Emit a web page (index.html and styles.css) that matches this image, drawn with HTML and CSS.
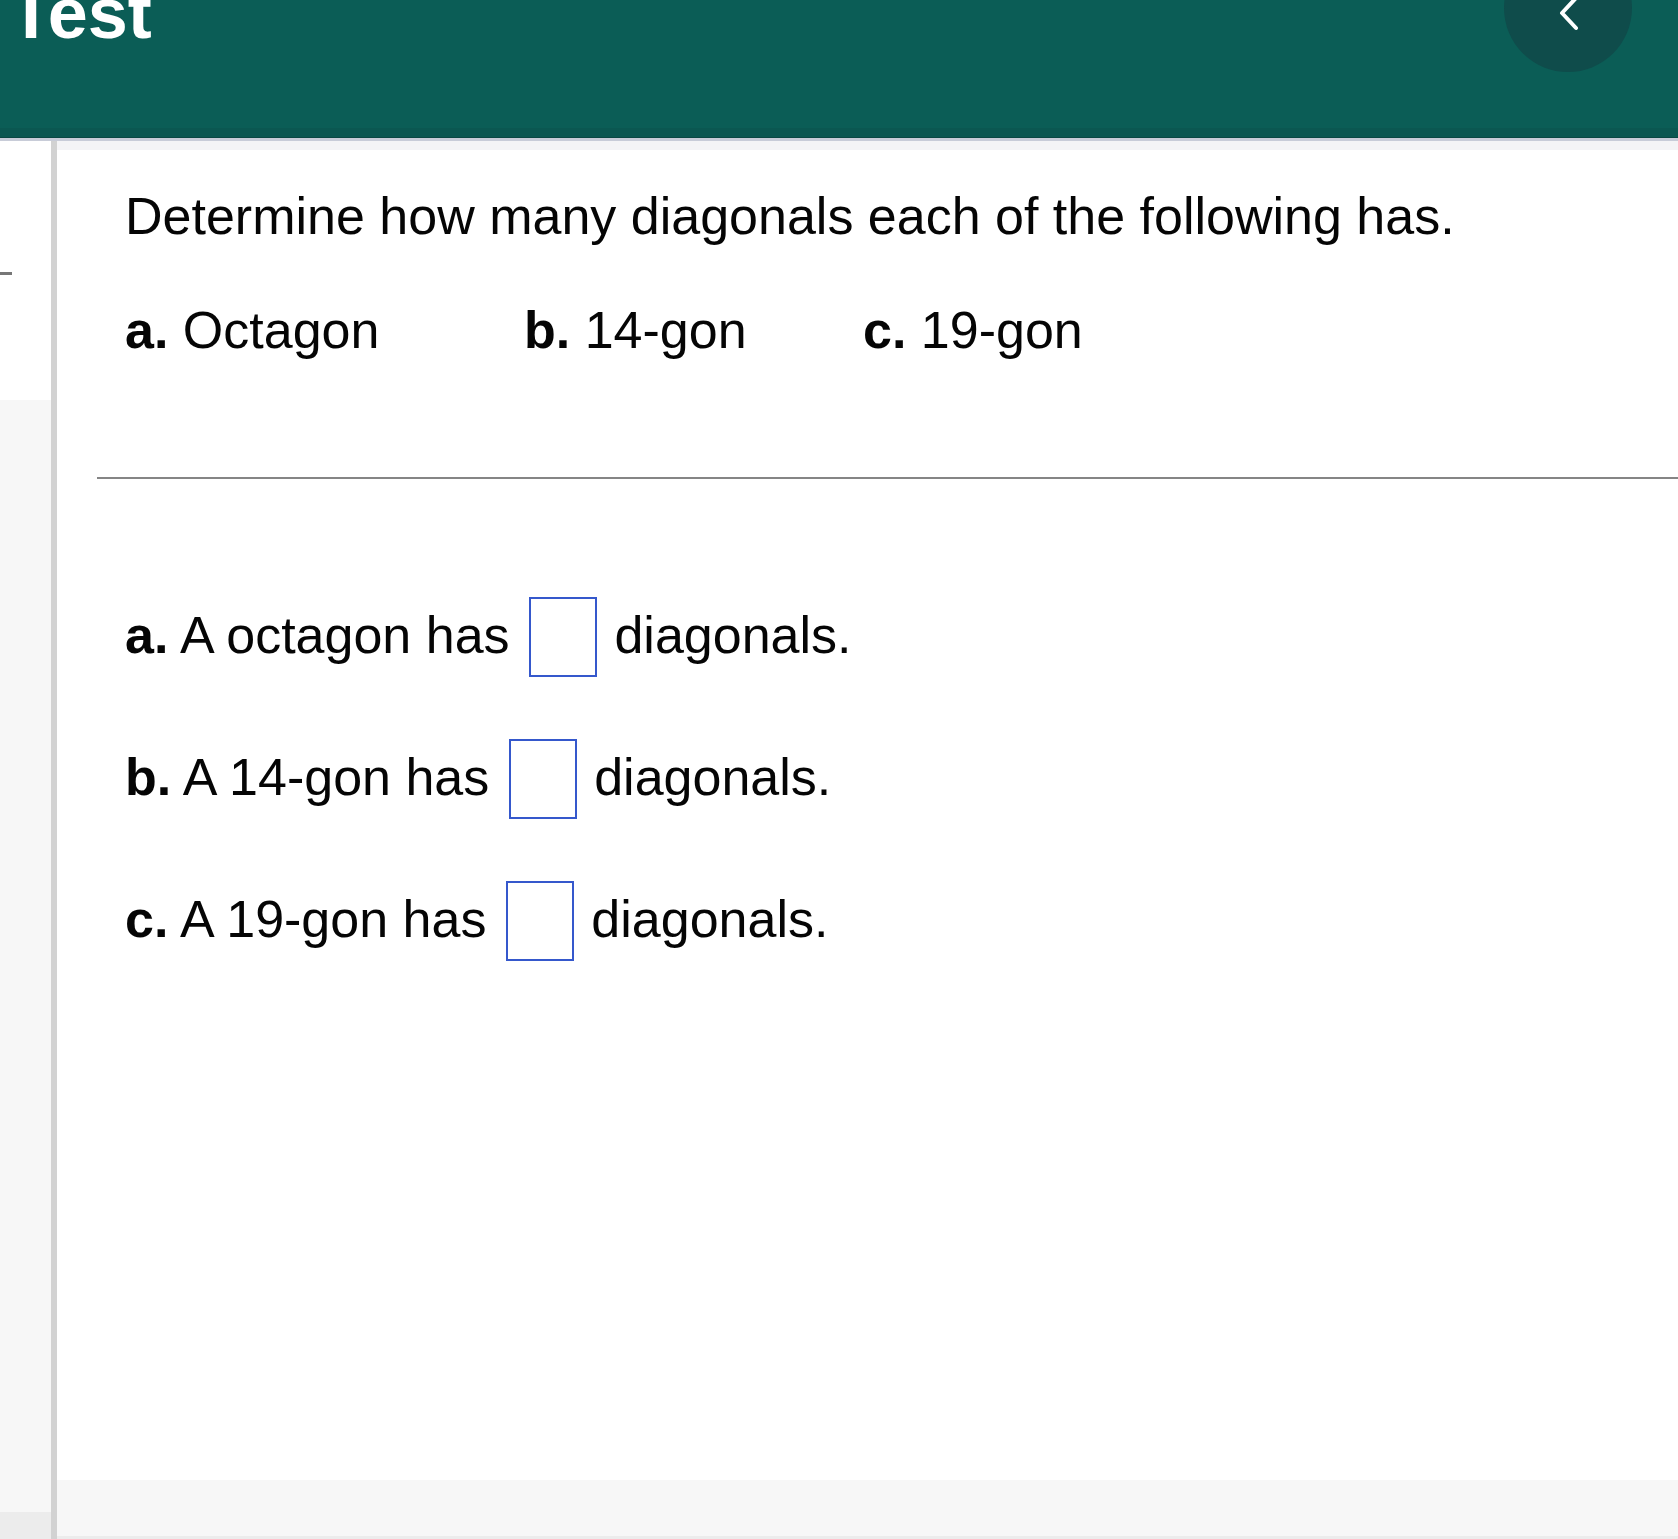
FILE: index.html
```html
<!DOCTYPE html>
<html lang="en">
<head>
  <meta charset="UTF-8" />
  <meta name="viewport" content="width=device-width, initial-scale=1" />
  <title>Test</title>
  <link rel="stylesheet" href="styles.css">
</head>
<body>
  <header class="topbar">
    <h1>Test</h1>
    <button class="collapse" aria-label="Collapse">
      <svg width="128" height="128" viewBox="0 0 128 128">
        <polyline points="72,54 58,69 72,84" fill="none" stroke="#fff" stroke-width="4" stroke-linecap="round" stroke-linejoin="round" />
      </svg>
    </button>
  </header>

  <div class="layout">
    <aside class="sidebar">
      <div class="marker"></div>
    </aside>

    <main class="content">
      <p class="question">Determine how many diagonals each of the following has.</p>

      <div class="options">
        <span class="opt opt-a"><b>a.</b> Octagon</span>
        <span class="opt opt-b"><b>b.</b> 14-gon</span>
        <span class="opt"><b>c.</b> 19-gon</span>
      </div>

      <hr class="divider" />

      <div class="answers">
        <div class="answer"><b>a.</b> A octagon has <span class="blank"></span> diagonals.</div>
        <div class="answer"><b>b.</b> A 14-gon has <span class="blank"></span> diagonals.</div>
        <div class="answer"><b>c.</b> A 19-gon has <span class="blank"></span> diagonals.</div>
      </div>

      <div class="bottom-band"></div>
    </main>
  </div>
</body>
</html>
```

FILE: styles.css
```css
body {
  margin: 0;
  font-family: 'Liberation Sans', Arial, Helvetica, sans-serif;
  color: #050505;
  background: #fff;
  height: 1539px;
  overflow: hidden;
}

/* Верхняя панель */
.topbar {
  display: flow-root;
  position: relative;
  z-index: 1;
  height: 128px;
  background-color: #0b5d56;
  border-bottom: 9px solid #0b5751;
  box-shadow: 0 1px 0 #0a4843, 0 4px 0 #c8ccd8;
}

.topbar h1 {
  margin: -23px 0 0 9px;
  font-size: 72px;
  line-height: 72px;
  font-weight: bold;
  color: #fff;
}

.collapse {
  position: absolute;
  top: -56px;
  right: 46px;
  width: 128px;
  height: 128px;
  padding: 0;
  border: none;
  border-radius: 50%;
  background-color: #0f4c4b;
  cursor: pointer;
}

.collapse svg {
  display: block;
}

.layout {
  display: flex;
  height: 1402px;
}

.sidebar {
  width: 51px;
  flex-shrink: 0;
  border-right: 6px solid #d2d2d2;
  background: linear-gradient(to bottom, #fff 0, #fff 263px, #f7f7f7 263px, #f7f7f7 1375px, #ececec 1375px);
}

.marker {
  margin-top: 135px;
  width: 12px;
  height: 3px;
  background-color: #777;
}

.content {
  flex: 1;
  display: flex;
  flex-direction: column;
  padding-top: 49px;
  background: linear-gradient(to bottom, #f4f4f6 0, #f4f4f6 13px, #fff 13px);
  font-size: 52px;
  line-height: 60px;
}

.question {
  margin: 0 0 0 68px;
}

.options {
  margin: 54px 0 0 68px;
  display: flex;
}

.opt-a {
  width: 399px;
}

.opt-b {
  width: 339px;
}

.divider {
  margin: 117px 0 0 40px;
  height: 2px;
  border: none;
  background-color: #858585;
}

.answers {
  margin: 118px 0 0 68px;
  display: flex;
  flex-direction: column;
  gap: 62px;
}

.blank {
  display: inline-block;
  box-sizing: border-box;
  width: 68px;
  height: 80px;
  margin: 0 3px 0 5px;
  vertical-align: -24px;
  border: 2px solid #3558cc;
  background: #fff;
}

.bottom-band {
  margin-top: auto;
  height: 56px;
  background-color: #f7f7f7;
  border-bottom: 3px solid #ececec;
}
```
